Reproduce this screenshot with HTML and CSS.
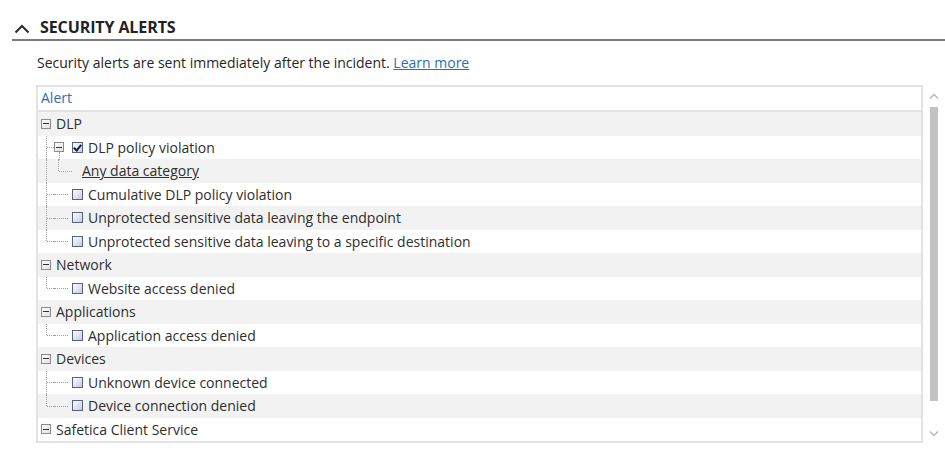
FILE: index.html
```html
<!DOCTYPE html>
<html>
<head>
<meta charset="utf-8">
<link rel="stylesheet" href="styles.css">
</head>
<body>
<div class="page">
  <div class="head">
    <svg class="caret" width="16" height="10" viewBox="0 0 16 10"><path d="M1.5 8.5 L8 2 L14.5 8.5" fill="none" stroke="#2b2b2b" stroke-width="2"/></svg>
    <h2 class="title">SECURITY ALERTS</h2>
  </div>
  <p class="desc">Security alerts are sent immediately after the incident. <a class="link" href="#">Learn more</a></p>
  <div class="panel">
    <div class="table">
      <div class="thead">Alert</div>

      <div class="row alt">
        <span class="exp root"></span><span class="label">DLP</span>
      </div>
      <div class="row">
        <span class="ga tee"></span><span class="gb"><span class="exp sub"></span></span><span class="cb checked"></span><span class="label">DLP policy violation</span>
      </div>
      <div class="row alt">
        <span class="ga pipe"></span><span class="gc"></span><span class="label cat">Any data category</span>
      </div>
      <div class="row">
        <span class="ga tee"></span><span class="gb line"></span><span class="cb"></span><span class="label">Cumulative DLP policy violation</span>
      </div>
      <div class="row alt">
        <span class="ga tee"></span><span class="gb line"></span><span class="cb"></span><span class="label">Unprotected sensitive data leaving the endpoint</span>
      </div>
      <div class="row">
        <span class="ga end"></span><span class="gb line"></span><span class="cb"></span><span class="label">Unprotected sensitive data leaving to a specific destination</span>
      </div>

      <div class="row alt">
        <span class="exp root"></span><span class="label">Network</span>
      </div>
      <div class="row">
        <span class="ga end"></span><span class="gb line"></span><span class="cb"></span><span class="label">Website access denied</span>
      </div>

      <div class="row alt">
        <span class="exp root"></span><span class="label">Applications</span>
      </div>
      <div class="row">
        <span class="ga end"></span><span class="gb line"></span><span class="cb"></span><span class="label">Application access denied</span>
      </div>

      <div class="row alt">
        <span class="exp root"></span><span class="label">Devices</span>
      </div>
      <div class="row">
        <span class="ga tee"></span><span class="gb line"></span><span class="cb"></span><span class="label">Unknown device connected</span>
      </div>
      <div class="row alt">
        <span class="ga end"></span><span class="gb line"></span><span class="cb"></span><span class="label">Device connection denied</span>
      </div>

      <div class="row">
        <span class="exp root"></span><span class="label">Safetica Client Service</span>
      </div>
    </div>
    <div class="scroll">
      <svg class="arrow" width="10" height="6" viewBox="0 0 10 6"><path d="M1 5.5 L5 1.5 L9 5.5" fill="none" stroke="#b5b5b5" stroke-width="1.3"/></svg>
      <div class="thumb"></div>
      <svg class="arrow down" width="10" height="6" viewBox="0 0 10 6"><path d="M1 0.5 L5 4.5 L9 0.5" fill="none" stroke="#b5b5b5" stroke-width="1.3"/></svg>
    </div>
  </div>
</div>
</body>
</html>
```

FILE: styles.css
```css
* { box-sizing: border-box; }
html, body { margin: 0; padding: 0; background: #fff; }
body {
  font-family: "Open Sans", "Noto Sans", "Liberation Sans", sans-serif;
  color: #2e2e2e;
  font-size: 14px;
}
.page { padding-left: 12px; width: 945px; }

.head {
  height: 41px;
  padding-top: 15px;
  display: flex;
  align-items: center;
  border-bottom: 2px solid #7b7b7b;
}
.caret { margin-left: 2px; margin-top: 4px; flex: none; }
.title {
  margin: 0 0 0 10px;
  font-size: 16px;
  font-weight: 700;
  color: #222;
  letter-spacing: -0.1px;
  line-height: 20px;
}

.desc {
  margin: 13px 0 0 25px;
  line-height: 18px;
  color: #262626;
}
.link { color: #2a6fb0; text-decoration: underline; }

.panel {
  margin: 13px 0 0 24px;
  display: flex;
}
.table {
  width: 887px;
  border: 2px solid #e2e2e2;
  flex: none;
}
.thead {
  height: 25px;
  border-bottom: 2px solid #e2e2e2;
  padding-left: 3px;
  line-height: 22px;
  color: #2f6db0;
}
.row {
  height: 23.5px;
  display: flex;
  align-items: center;
  color: #2e2e2e;
}
.row.alt { background: #f2f2f2; }
.label { white-space: nowrap; }

/* expander boxes */
.exp {
  position: relative;
  width: 10px;
  height: 10px;
  border: 1px solid #8c8c8c;
  background: linear-gradient(135deg, #fff, #e0e0e0);
  flex: none;
}
.exp::before {
  content: "";
  position: absolute;
  left: 1px;
  top: 3.5px;
  width: 6px;
  height: 1.2px;
  background: #333;
}
.exp.root { margin-left: 3px; margin-right: 5px; }

/* tree guides */
.ga, .gb, .gc { position: relative; align-self: stretch; flex: none; }
.ga { width: 16px; }
.gb { width: 18px; display: flex; align-items: center; }
.gc { width: 24px; }

.ga::before, .gc::before {
  content: "";
  position: absolute;
  left: 8px;
  top: 0;
  bottom: 0;
  border-left: 1px dotted #a0a0a0;
}
.ga.end::before { bottom: 50%; }
.ga.tee::after, .ga.end::after, .gb.line::after, .gc::after {
  content: "";
  position: absolute;
  top: 50%;
  border-top: 1px dotted #a0a0a0;
}
.ga.tee::after, .ga.end::after { left: 9px; right: 0; }
.gb.line::after { left: 0; right: 4px; }

.gb .exp.sub::after {
  content: "";
  position: absolute;
  left: 4px;
  top: 9px;
  height: 8px;
  border-left: 1px dotted #a0a0a0;
}
.gb .exp.sub { margin-left: 0; }

.gc::before { left: 4px; bottom: 50%; }
.gc::after { left: 5px; right: 6px; }

/* checkbox */
.cb {
  position: relative;
  width: 11px;
  height: 11px;
  border: 1px solid #56627e;
  background: linear-gradient(135deg, #f4f4fa 20%, #c9c9df 100%);
  margin-right: 5px;
  flex: none;
}
.cb.checked::after {
  content: "";
  position: absolute;
  left: 2px;
  top: 0px;
  width: 3px;
  height: 6px;
  border-right: 2px solid #1c2233;
  border-bottom: 2px solid #1c2233;
  transform: rotate(40deg);
}
.cat { text-decoration: underline; margin-left: 4px; }

/* scrollbar */
.scroll {
  width: 22px;
  display: flex;
  flex-direction: column;
  align-items: center;
  padding-top: 8px;
}
.arrow { flex: none; }
.thumb {
  width: 8px;
  height: 294px;
  background: #c2c2c2;
  margin-top: 8px;
}
.arrow.down { margin-top: 30px; }
```
